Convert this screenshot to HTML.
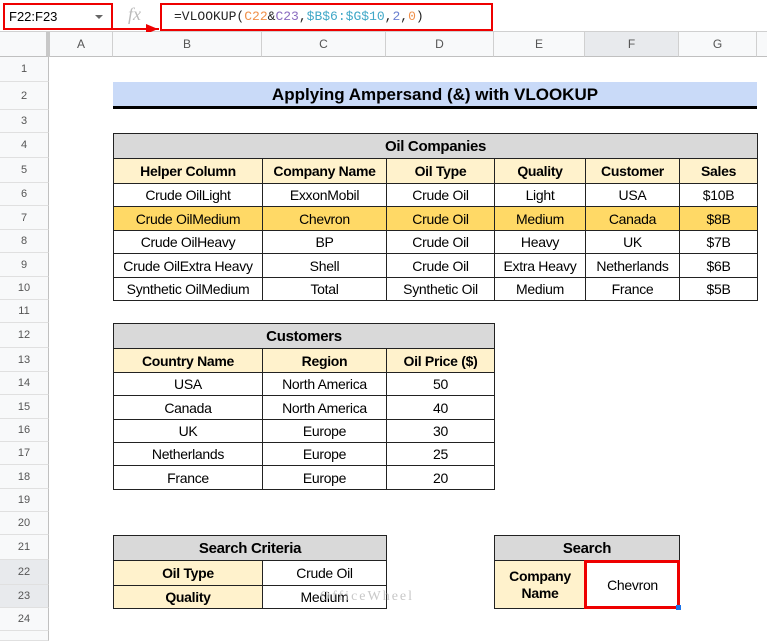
<!DOCTYPE html>
<html><head><style>
*{margin:0;padding:0;box-sizing:border-box}
body{width:767px;height:635px;overflow:hidden;background:#fff;font-family:"Liberation Sans",Arial,sans-serif;position:relative;color:#000}
.abs{position:absolute}
table{position:absolute;border-collapse:collapse;table-layout:fixed;font-size:14px;letter-spacing:-0.3px}
td{border:1px solid #222;text-align:center;padding:0;white-space:nowrap;overflow:hidden}
.t{background:#d9d9d9;font-weight:bold;font-size:15px}
.h{background:#fff2cc;font-weight:bold}
.y{background:#ffd966}
.rn{position:absolute;left:0;width:49px;background:#f8f9fa;border-bottom:1px solid #e0e0e0;border-right:1px solid #c0c0c0;color:#555;font-size:11px;text-align:center}
.ch{position:absolute;top:32px;height:25px;background:#f8f9fa;border-right:1px solid #d0d0d0;border-bottom:1px solid #c0c0c0;color:#555;font-size:12px;text-align:center;line-height:24px}
</style></head><body>
<div class="abs" style="left:0;top:0;width:767px;height:32px;background:#fff;border-bottom:1px solid #d0d0d0"></div>
<div class="abs" style="left:3px;top:3px;width:110px;height:27px;border:2px solid #e00;font-size:13px;line-height:23px;padding-left:4px">F22:F23<span style="position:absolute;right:8px;top:10px;border-left:4px solid transparent;border-right:4px solid transparent;border-top:4px solid #666"></span></div>
<div class="abs" style="left:128px;top:4px;color:#bbb;font-style:italic;font-family:'Liberation Serif',serif;font-size:18px">fx</div>
<div class="abs" style="left:113px;top:28px;width:46px;height:2px;background:#e00"></div>
<div class="abs" style="left:111px;top:18px;width:2px;height:12px;background:#e00"></div>
<div class="abs" style="left:146px;top:24px;border-top:5px solid transparent;border-bottom:5px solid transparent;border-left:12px solid #e00"></div>
<div class="abs" style="left:160px;top:3px;width:333px;height:28px;border:2px solid #e00;font-family:'Liberation Mono',monospace;font-size:13px;line-height:24px;padding-left:12px;color:#222">=VLOOKUP(<span style="color:#f0904a">C22</span>&amp;<span style="color:#8b6cc0">C23</span>,<span style="color:#3fa7c7">$B$6:$G$10</span>,<span style="color:#6a7fd0">2</span>,<span style="color:#f0904a">0</span>)</div>
<div class="ch" style="left:0;width:50px;border-right:4px solid #c8c8c8"></div>
<div class="ch" style="left:50px;width:63px">A</div>
<div class="ch" style="left:113px;width:149px">B</div>
<div class="ch" style="left:262px;width:124px">C</div>
<div class="ch" style="left:386px;width:108px">D</div>
<div class="ch" style="left:494px;width:91px">E</div>
<div class="ch" style="left:585px;width:94px;background:#e8eaed">F</div>
<div class="ch" style="left:679px;width:78px">G</div>
<div class="ch" style="left:757px;width:10px;border-right:none"></div>
<div class="rn" style="top:57px;height:25px;line-height:25px">1</div>
<div class="rn" style="top:82px;height:28px;line-height:28px">2</div>
<div class="rn" style="top:110px;height:23px;line-height:23px">3</div>
<div class="rn" style="top:133px;height:25px;line-height:25px">4</div>
<div class="rn" style="top:158px;height:25px;line-height:25px">5</div>
<div class="rn" style="top:183px;height:23px;line-height:23px">6</div>
<div class="rn" style="top:206px;height:24px;line-height:24px">7</div>
<div class="rn" style="top:230px;height:23px;line-height:23px">8</div>
<div class="rn" style="top:253px;height:24px;line-height:24px">9</div>
<div class="rn" style="top:277px;height:23px;line-height:23px">10</div>
<div class="rn" style="top:300px;height:23px;line-height:23px">11</div>
<div class="rn" style="top:323px;height:25px;line-height:25px">12</div>
<div class="rn" style="top:348px;height:24px;line-height:24px">13</div>
<div class="rn" style="top:372px;height:23px;line-height:23px">14</div>
<div class="rn" style="top:395px;height:24px;line-height:24px">15</div>
<div class="rn" style="top:419px;height:23px;line-height:23px">16</div>
<div class="rn" style="top:442px;height:23px;line-height:23px">17</div>
<div class="rn" style="top:465px;height:24px;line-height:24px">18</div>
<div class="rn" style="top:489px;height:23px;line-height:23px">19</div>
<div class="rn" style="top:512px;height:23px;line-height:23px">20</div>
<div class="rn" style="top:535px;height:25px;line-height:25px">21</div>
<div class="rn" style="top:560px;height:25px;line-height:25px;background:#e8eaed">22</div>
<div class="rn" style="top:585px;height:23px;line-height:23px;background:#e8eaed">23</div>
<div class="rn" style="top:608px;height:23px;line-height:23px">24</div>
<div class="rn" style="top:631px;height:10px"></div>
<div class="abs" style="left:113px;top:82px;width:644px;height:27px;background:#c9daf8;border-bottom:3px solid #000;font-weight:bold;font-size:17px;text-align:center;line-height:26px">Applying Ampersand (&amp;) with VLOOKUP</div>
<table style="left:113px;top:133px;width:644px">
<colgroup><col style="width:149px"><col style="width:124px"><col style="width:108px"><col style="width:91px"><col style="width:94px"><col style="width:78px"></colgroup>
<tr style="height:25px"><td class="t" colspan="6">Oil Companies</td></tr>
<tr style="height:25px" class="h"><td>Helper Column</td><td>Company Name</td><td>Oil Type</td><td>Quality</td><td>Customer</td><td>Sales</td></tr>
<tr style="height:23px"><td>Crude OilLight</td><td>ExxonMobil</td><td>Crude Oil</td><td>Light</td><td>USA</td><td>$10B</td></tr>
<tr style="height:24px" class="y"><td>Crude OilMedium</td><td>Chevron</td><td>Crude Oil</td><td>Medium</td><td>Canada</td><td>$8B</td></tr>
<tr style="height:23px"><td>Crude OilHeavy</td><td>BP</td><td>Crude Oil</td><td>Heavy</td><td>UK</td><td>$7B</td></tr>
<tr style="height:24px"><td>Crude OilExtra Heavy</td><td>Shell</td><td>Crude Oil</td><td>Extra Heavy</td><td>Netherlands</td><td>$6B</td></tr>
<tr style="height:23px"><td>Synthetic OilMedium</td><td>Total</td><td>Synthetic Oil</td><td>Medium</td><td>France</td><td>$5B</td></tr>
</table>
<table style="left:113px;top:323px;width:381px">
<colgroup><col style="width:149px"><col style="width:124px"><col style="width:108px"></colgroup>
<tr style="height:25px"><td class="t" colspan="3">Customers</td></tr>
<tr style="height:24px" class="h"><td>Country Name</td><td>Region</td><td>Oil Price ($)</td></tr>
<tr style="height:23px"><td>USA</td><td>North America</td><td>50</td></tr>
<tr style="height:24px"><td>Canada</td><td>North America</td><td>40</td></tr>
<tr style="height:23px"><td>UK</td><td>Europe</td><td>30</td></tr>
<tr style="height:23px"><td>Netherlands</td><td>Europe</td><td>25</td></tr>
<tr style="height:24px"><td>France</td><td>Europe</td><td>20</td></tr>
</table>
<table style="left:113px;top:535px;width:273px">
<colgroup><col style="width:149px"><col style="width:124px"></colgroup>
<tr style="height:25px"><td class="t" colspan="2">Search Criteria</td></tr>
<tr style="height:25px"><td class="h">Oil Type</td><td>Crude Oil</td></tr>
<tr style="height:23px"><td class="h">Quality</td><td>Medium</td></tr>
</table>
<table style="left:494px;top:535px;width:185px">
<colgroup><col style="width:91px"><col style="width:94px"></colgroup>
<tr style="height:25px"><td class="t" colspan="2">Search</td></tr>
<tr style="height:48px"><td class="h" style="line-height:17px">Company<br>Name</td><td>Chevron</td></tr>
</table>
<div class="abs" style="left:584px;top:560px;width:96px;height:49px;border:3px solid #e00"></div>
<div class="abs" style="left:676px;top:605px;width:5px;height:5px;background:#1a73e8"></div>
<div class="abs" style="left:320px;top:589px;font-size:14px;color:#bbb;letter-spacing:2px;font-family:'Liberation Serif',serif;opacity:.8">OfficeWheel</div>
</body></html>
